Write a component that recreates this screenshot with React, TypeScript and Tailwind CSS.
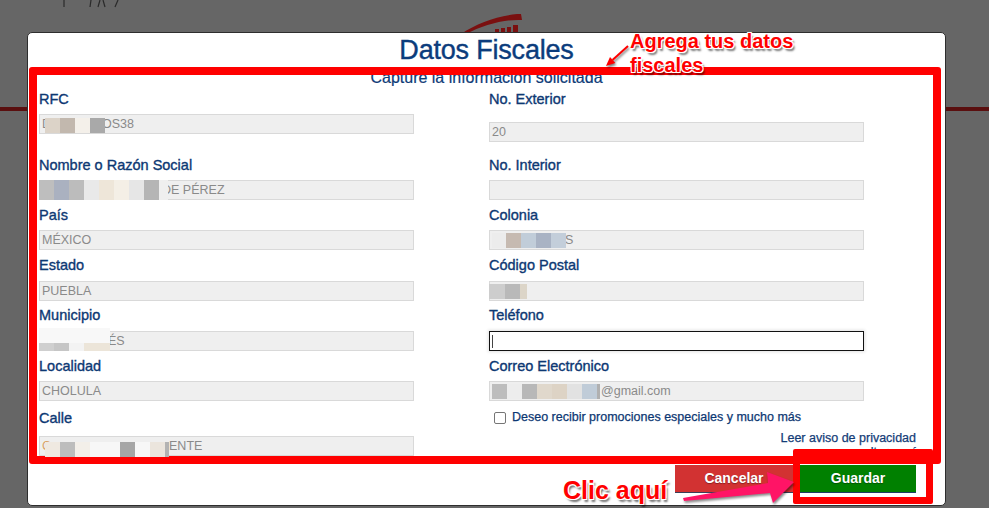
import type { ReactNode } from "react";

type BoxProps = {
  children?: ReactNode;
  active?: boolean;
  className?: string;
};

function Label({ children, className = "" }: { children: ReactNode; className?: string }) {
  return (
    <div
      className={`h-[17px] whitespace-nowrap text-[14.5px] leading-[17px] text-[#0d3873] [-webkit-text-stroke:0.35px_#0d3873] ${className}`}
    >
      {children}
    </div>
  );
}

function Box({ children, active, className = "" }: BoxProps) {
  const skin = active
    ? "border-[#111111] bg-white shadow-[0_0_3px_1px_rgba(0,0,0,0.12)]"
    : "border-[#d9d9d9] bg-[#efefef]";
  return (
    <div
      className={`relative flex h-[20px] w-[375px] items-center whitespace-nowrap border pl-[2px] text-[12.5px] text-[#8a8a8a] ${skin} ${className}`}
    >
      {children}
    </div>
  );
}

// pixelated privacy blur over the values
function Mask({ cells, className = "" }: { cells: string[]; className?: string }) {
  return (
    <div className={`relative z-10 flex shrink-0 ${className}`}>
      {cells.map((c, i) => (
        <div key={i} className={c} />
      ))}
    </div>
  );
}

export default function App() {
  return (
    <div className="relative h-[508px] w-[989px] overflow-hidden bg-[#666666] font-['Liberation_Sans',Arial,sans-serif]">
      {/* page behind the dialog */}
      <div className="absolute left-0 top-[107px] h-[4px] w-full bg-[#5a0f0f]" />
      <svg className="absolute left-[455px] top-[10px]" width="75" height="24" viewBox="0 0 75 24">
        <path d="M6 24 C 22 13, 42 6, 62 4 L 66 4 L 67 10 C 50 9, 28 15, 11 24 Z" fill="#7a1010" />
        <rect x="40" y="19" width="4" height="4" fill="#7a1010" />
        <rect x="46" y="18" width="4" height="5" fill="#7a1010" />
        <rect x="52" y="17" width="4" height="6" fill="#7a1010" />
        <rect x="58" y="15" width="5" height="8" fill="#7a1010" />
      </svg>
      <svg className="absolute left-[60px] top-0" width="64" height="10" viewBox="0 0 64 10">
        <g stroke="#2a2a2a" strokeWidth="1.2">
          <line x1="4" y1="0" x2="4" y2="7" />
          <line x1="31" y1="0" x2="30" y2="7" />
          <line x1="40" y1="0" x2="38" y2="7" />
          <line x1="43" y1="0" x2="45" y2="7" />
          <line x1="58" y1="0" x2="55" y2="7" />
        </g>
      </svg>

      {/* dialog */}
      <div className="absolute left-[27px] top-[32px] flex h-[474px] w-[919px] flex-col rounded-[5px] border border-[#2e2e2e] bg-white">
        <h1 className="mt-[2px] h-[30px] text-center text-[27px] leading-[30px] tracking-[-0.2px] text-[#0b3c7c] [-webkit-text-stroke:0.4px_#0b3c7c]">
          Datos Fiscales
        </h1>
        <p className="mt-[4px] h-[18px] text-center text-[16px] leading-[18px] text-[#0f3b77] [-webkit-text-stroke:0.2px_#0f3b77]">
          Capture la información solicitada
        </p>

        <div className="mt-[4px] flex h-[368px] overflow-hidden pl-[11px]">
          <div className="flex w-[375px] shrink-0 flex-col">
            <Label>RFC</Label>
            <Box className="mt-[6px]">
              <span>D</span>
              <Mask
                className="-ml-[6px] translate-y-[1px]"
                cells={[
                  "h-[15px] w-[15px] bg-[#dcd3c8]",
                  "h-[15px] w-[15px] bg-[#c2b8ae]",
                  "h-[15px] w-[15px] bg-[#f4f0ea]",
                  "h-[15px] w-[15px] bg-[#a9a9a9]",
                ]}
              />
              <span className="-ml-[3px]">OS38</span>
            </Box>

            <Label className="mt-[23px]">Nombre o Razón Social</Label>
            <Box className="mt-[6px]">
              <Mask
                className="-ml-[3px]"
                cells={[
                  "h-[20px] w-[15px] bg-[#bebebe]",
                  "h-[20px] w-[15px] bg-[#aab1c0]",
                  "h-[20px] w-[15px] bg-[#bcbcbc]",
                  "h-[20px] w-[15px] bg-[#e9e9e9]",
                  "h-[20px] w-[15px] bg-[#eee6d9]",
                  "h-[20px] w-[15px] bg-[#f4efe6]",
                  "h-[20px] w-[15px] bg-[#e6e6e6]",
                  "h-[20px] w-[15px] bg-[#b5b5b5]",
                  "h-[20px] w-[9px] bg-[#efefef]",
                ]}
              />
              <span className="-ml-[6px]">DE PÉREZ</span>
            </Box>

            <Label className="mt-[7px]">País</Label>
            <Box className="mt-[6px]">MÉXICO</Box>

            <Label className="mt-[7px]">Estado</Label>
            <Box className="mt-[7px]">PUEBLA</Box>

            <Label className="mt-[6px]">Municipio</Label>
            <Box className="mt-[7px]">
              <div className="absolute -left-px -top-[4px] z-10 flex h-[23px] w-[71px] flex-col bg-[#f8f8f8]">
                <div className="flex-1" />
                <div className="flex h-[8px]">
                  <div className="w-[15px] bg-[#cfcfcf]" />
                  <div className="w-[15px] bg-[#c6c6c6]" />
                  <div className="w-[15px] bg-[#f3f3f3]" />
                  <div className="w-[26px] bg-[#ece5d9]" />
                </div>
              </div>
              <span className="ml-[66px]">ÉS</span>
            </Box>

            <Label className="mt-[7px]">Localidad</Label>
            <Box className="mt-[6px]">CHOLULA</Box>

            <Label className="mt-[9px]">Calle</Label>
            <Box className="mt-[9px]">
              <span className="text-[#d9a36a]">C</span>
              <Mask
                className="-ml-[6px] translate-y-[3px]"
                cells={[
                  "h-[15px] w-[15px] bg-[#efe9e1]",
                  "h-[15px] w-[15px] bg-[#bdbdbd]",
                  "h-[15px] w-[15px] bg-[#f3efe9]",
                  "h-[15px] w-[30px] bg-[#f7f7f7]",
                  "h-[15px] w-[15px] bg-[#a6a6a6]",
                  "h-[15px] w-[15px] bg-[#f7f7f7]",
                  "h-[15px] w-[15px] bg-[#ebe5dd]",
                  "h-[15px] w-[4px] bg-[#b3b3b3]",
                ]}
              />
              <span>ENTE</span>
            </Box>
          </div>

          <div className="ml-[75px] flex w-[427px] shrink-0 flex-col">
            <Label>No. Exterior</Label>
            <Box className="mt-[14px]">20</Box>

            <Label className="mt-[15px]">No. Interior</Label>
            <Box className="mt-[6px]" />

            <Label className="mt-[7px]">Colonia</Label>
            <Box className="mt-[6px]">
              <Mask
                cells={[
                  "h-[15px] w-[14px] bg-[#ececec]",
                  "h-[15px] w-[15px] bg-[#c6bab1]",
                  "h-[15px] w-[15px] bg-[#c1cdd9]",
                  "h-[15px] w-[15px] bg-[#a9b3c4]",
                  "h-[15px] w-[15px] bg-[#c3ceda]",
                ]}
              />
              <span className="-ml-[1px]">S</span>
            </Box>

            <Label className="mt-[7px]">Código Postal</Label>
            <Box className="mt-[7px]">
              <Mask
                className="-ml-[3px]"
                cells={[
                  "h-[15px] w-[16px] bg-[#cdcdcd]",
                  "h-[15px] w-[15px] bg-[#b9b9b9]",
                  "h-[15px] w-[7px] bg-[#dcd5c8]",
                ]}
              />
            </Box>

            <Label className="mt-[6px]">Teléfono</Label>
            <Box active className="mt-[7px]">
              <div className="h-[13px] w-px bg-[#444444]" />
            </Box>

            <Label className="mt-[7px]">Correo Electrónico</Label>
            <Box className="mt-[6px]">
              <Mask
                cells={[
                  "h-[15px] w-[15px] bg-[#bdbdbd]",
                  "h-[15px] w-[15px] bg-[#ededed]",
                  "h-[15px] w-[15px] bg-[#b8b8b8]",
                  "h-[15px] w-[15px] bg-[#e0d8cc]",
                  "h-[15px] w-[15px] bg-[#ddd3c5]",
                  "h-[15px] w-[15px] bg-[#e2e2e2]",
                  "h-[15px] w-[15px] bg-[#c0ccd8]",
                  "h-[15px] w-[3px] bg-[#b0b0b0]",
                ]}
              />
              <span className="ml-[1px]">@gmail.com</span>
            </Box>

            <label className="mt-[9px] flex h-[15px] items-center gap-[6px] pl-[5px] text-[12.5px] leading-[15px] text-[#0d3873] [-webkit-text-stroke:0.25px_#0d3873]">
              <span className="h-[12px] w-[12px] shrink-0 rounded-[2px] border border-[#767676] bg-white [-webkit-text-stroke:0]" />
              <span className="whitespace-nowrap">Deseo recibir promociones especiales y mucho más</span>
            </label>

            <div className="mt-[6px] text-right text-[12.5px] leading-[14px] text-[#143c77] [-webkit-text-stroke:0.25px_#143c77]">
              <div>Leer aviso de privacidad</div>
              <div>consultar aquí</div>
            </div>
          </div>
        </div>

        <div className="mt-[6px] flex justify-end gap-[7px] pr-[29px]">
          <button className="h-[28px] w-[118px] border-b border-[#3a3f5a] bg-[#d23232] text-[14px] font-bold text-white [text-shadow:0_1px_1px_rgba(0,0,0,0.35)]">
            Cancelar
          </button>
          <button className="h-[28px] w-[116px] border-b border-[#1f3d66] bg-[#008000] text-[14px] font-bold text-white [text-shadow:0_1px_1px_rgba(0,0,0,0.35)]">
            Guardar
          </button>
        </div>
      </div>

      {/* tutorial annotations */}
      <div className="pointer-events-none absolute left-[29px] top-[67px] h-[397px] w-[912px] rounded-[3px] border-[8px] border-[#ff0000]" />
      <div className="pointer-events-none absolute left-[793px] top-[449px] h-[55px] w-[140px] rounded-[2px] border-[7px] border-[#ff0000]" />

      <div className="absolute left-[630px] top-[29px] text-[20px] font-bold leading-[24px] text-[#ff0000] [text-shadow:-1px_-1px_0_#fff,1px_-1px_0_#fff,-1px_1px_0_#fff,1px_1px_0_#fff,2px_3px_2px_rgba(0,0,0,0.55)]">
        <div>Agrega tus datos</div>
        <div>fiscales</div>
      </div>
      <svg
        className="absolute left-[600px] top-[40px] drop-shadow-[1px_2px_1px_rgba(0,0,0,0.5)]"
        width="32"
        height="30"
        viewBox="0 0 32 30"
      >
        <line x1="28" y1="6" x2="12.5" y2="20" stroke="#ff0000" strokeWidth="2" />
        <polygon points="6,26 15.4,23 10,17" fill="#ff0000" />
      </svg>

      <div className="absolute left-[563px] top-[476px] text-[25px] font-bold leading-[28px] text-[#ff0000] [text-shadow:-1px_-1px_0_#fff,1px_-1px_0_#fff,-1px_1px_0_#fff,1px_1px_0_#fff,2px_3px_2px_rgba(0,0,0,0.55)]">
        Clic aquí
      </div>
      <svg
        className="absolute left-[680px] top-[468px] drop-shadow-[1px_2px_1px_rgba(0,0,0,0.45)]"
        width="120"
        height="40"
        viewBox="0 0 120 40"
      >
        <polygon points="3,30 88,15 87,4 114,14 93,35 90,25 4,33" fill="#ff1466" />
      </svg>
    </div>
  );
}
